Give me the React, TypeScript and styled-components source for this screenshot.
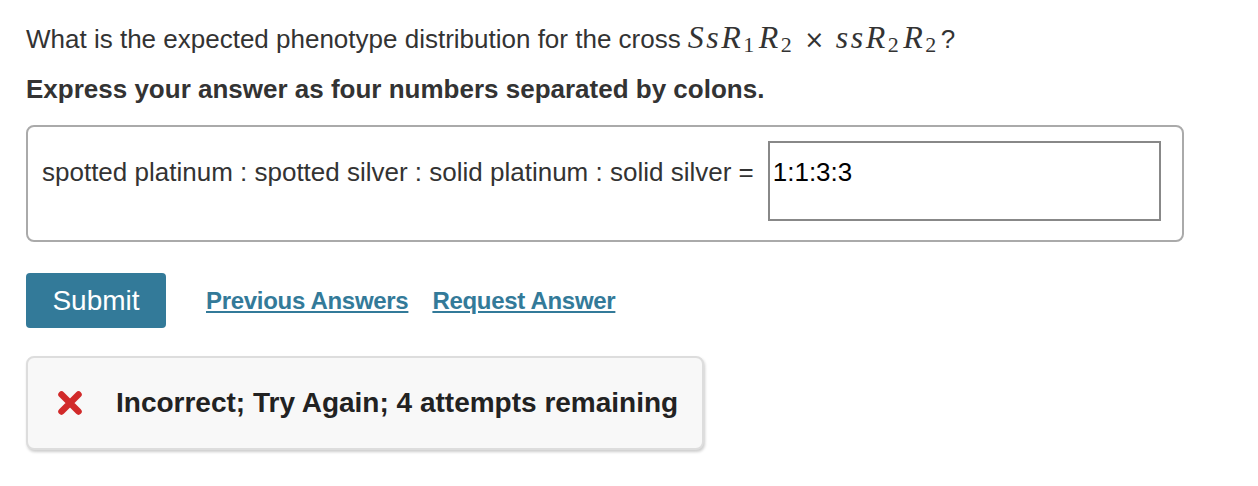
import React from "react";
import styled, { createGlobalStyle } from "styled-components";

const GlobalStyle = createGlobalStyle`
  body {
    margin: 0;
    background: #fff;
    font-family: "Liberation Sans", Arial, sans-serif;
    color: #333;
  }
`;

const Page = styled.div`
  padding: 19px 26px 20px;
  width: 1158px;
`;

const Question = styled.p`
  margin: 0;
  font-size: 26px;
  line-height: 36px;
  color: #333;
  white-space: nowrap;
`;

const Math = styled.span`
  font-family: "Liberation Serif", "Times New Roman", serif;
  font-style: italic;
  font-size: 32px;
  margin-left: 7px;
  letter-spacing: 2.5px;
`;

const Sub = styled.sub`
  font-style: normal;
  font-size: 22px;
  vertical-align: -4px;
  line-height: 0;
  margin-right: 2px;
`;

const Times = styled.span`
  font-style: normal;
  font-family: "DejaVu Sans", sans-serif;
  font-size: 24px;
  margin: 0 9px 0 8px;
`;

const Instruction = styled.p`
  margin: 16px 0 0;
  font-size: 26px;
  line-height: 30px;
  font-weight: 700;
  color: #333;
`;

const AnswerBox = styled.div`
  margin-top: 21px;
  border: 2px solid #aaa;
  border-radius: 8px;
  padding: 14px 20px 19px 14px;
  display: flex;
  align-items: flex-start;
  gap: 14px;
`;

const Label = styled.span`
  font-size: 26px;
  line-height: 30px;
  margin-top: 16px;
  color: #333;
  white-space: nowrap;
`;

const AnswerInput = styled.div`
  width: 393px;
  height: 80px;
  border: 2px solid #888;
  box-sizing: border-box;
  padding: 14px 3px 0;
  font-size: 26px;
  line-height: 30px;
  color: #000;
`;

const Actions = styled.div`
  display: flex;
  align-items: center;
  margin-top: 31px;
  gap: 24px;
`;

const SubmitButton = styled.button`
  width: 140px;
  height: 55px;
  background: #337a99;
  color: #fff;
  border: none;
  border-radius: 4px;
  font-family: "Liberation Sans", Arial, sans-serif;
  font-size: 28px;
  margin-right: 16px;
`;

const ActionLink = styled.a`
  font-size: 24px;
  font-weight: 700;
  color: #337a99;
  text-decoration: underline;
  letter-spacing: -0.3px;
`;

const Feedback = styled.div`
  margin-top: 28px;
  width: 678px;
  height: 94px;
  box-sizing: border-box;
  background: #f8f8f8;
  border: 2px solid #ddd;
  border-radius: 8px;
  box-shadow: 1px 2px 3px rgba(0, 0, 0, 0.2);
  display: flex;
  align-items: center;
  padding-left: 29px;
  gap: 33px;
`;

const FeedbackText = styled.span`
  font-size: 28px;
  font-weight: 700;
  color: #222;
`;

function CrossIcon() {
  return (
    <svg width="26" height="26" viewBox="0 0 26 26">
      <path
        d="M4.5 4.5 L21.5 21.5 M21.5 4.5 L4.5 21.5"
        stroke="#d12a2a"
        strokeWidth="6.5"
        strokeLinecap="round"
      />
    </svg>
  );
}

export default function App() {
  return (
    <Page>
      <GlobalStyle />
      <Question>
        What is the expected phenotype distribution for the cross
        <Math>
          SsR<Sub>1</Sub>R<Sub>2</Sub>
          <Times>×</Times>
          ssR<Sub>2</Sub>R<Sub>2</Sub>
        </Math>
        ?
      </Question>
      <Instruction>Express your answer as four numbers separated by colons.</Instruction>
      <AnswerBox>
        <Label>spotted platinum : spotted silver : solid platinum : solid silver =</Label>
        <AnswerInput>1:1:3:3</AnswerInput>
      </AnswerBox>
      <Actions>
        <SubmitButton>Submit</SubmitButton>
        <ActionLink href="#">Previous Answers</ActionLink>
        <ActionLink href="#">Request Answer</ActionLink>
      </Actions>
      <Feedback>
        <CrossIcon />
        <FeedbackText>Incorrect; Try Again; 4 attempts remaining</FeedbackText>
      </Feedback>
    </Page>
  );
}
